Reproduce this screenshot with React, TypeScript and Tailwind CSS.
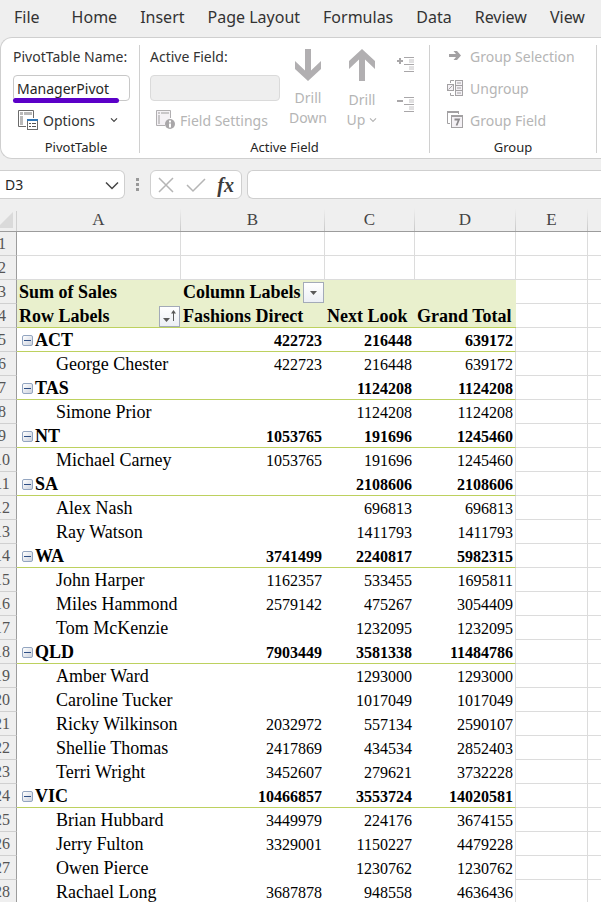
import type { ReactNode } from "react";

const tabs = ["Home", "Insert", "Page Layout", "Formulas", "Data", "Review", "View"];

type PivotRow = {
  label: string;
  values: [string, string, string];
  group?: boolean;
};

const rows: PivotRow[] = [
  { label: "ACT", values: ["422723", "216448", "639172"], group: true },
  { label: "George Chester", values: ["422723", "216448", "639172"] },
  { label: "TAS", values: ["", "1124208", "1124208"], group: true },
  { label: "Simone Prior", values: ["", "1124208", "1124208"] },
  { label: "NT", values: ["1053765", "191696", "1245460"], group: true },
  { label: "Michael Carney", values: ["1053765", "191696", "1245460"] },
  { label: "SA", values: ["", "2108606", "2108606"], group: true },
  { label: "Alex Nash", values: ["", "696813", "696813"] },
  { label: "Ray Watson", values: ["", "1411793", "1411793"] },
  { label: "WA", values: ["3741499", "2240817", "5982315"], group: true },
  { label: "John Harper", values: ["1162357", "533455", "1695811"] },
  { label: "Miles Hammond", values: ["2579142", "475267", "3054409"] },
  { label: "Tom McKenzie", values: ["", "1232095", "1232095"] },
  { label: "QLD", values: ["7903449", "3581338", "11484786"], group: true },
  { label: "Amber Ward", values: ["", "1293000", "1293000"] },
  { label: "Caroline Tucker", values: ["", "1017049", "1017049"] },
  { label: "Ricky Wilkinson", values: ["2032972", "557134", "2590107"] },
  { label: "Shellie Thomas", values: ["2417869", "434534", "2852403"] },
  { label: "Terri Wright", values: ["3452607", "279621", "3732228"] },
  { label: "VIC", values: ["10466857", "3553724", "14020581"], group: true },
  { label: "Brian Hubbard", values: ["3449979", "224176", "3674155"] },
  { label: "Jerry Fulton", values: ["3329001", "1150227", "4479228"] },
  { label: "Owen Pierce", values: ["", "1230762", "1230762"] },
  { label: "Rachael Long", values: ["3687878", "948558", "4636436"] },
];

const grid = "border-b border-r border-[#dcdcdc]";
const gridLast = "border-b border-[#dcdcdc]";

/* ICONS */
function OptionsIcon() {
  return (
    <svg width="20" height="20" viewBox="0 0 20 20" fill="none" aria-hidden="true">
      <path d="M8 16.5H.5V.5h15V8" stroke="#6b6b6b" />
      <path d="M2 2h3v3H2zM6 2h8v3H6zM2 6h3v9H2z" fill="#b9b9b9" />
      <rect x="9.5" y="9.5" width="10" height="10" fill="#fff" stroke="#6b6b6b" />
      <path d="M9 9h11v2H9z" fill="#2e75b6" />
      <path d="M11 13h2v1h-2zM11 16h2v1h-2z" fill="#555" />
      <path d="M14 13.500h4M14 16.500h4" stroke="#555" />
    </svg>
  );
}

function FieldSettingsIcon() {
  return (
    <svg width="20" height="20" viewBox="0 0 20 20" fill="none" aria-hidden="true">
      <path d="M9 15.5H.5V.5h14V8" fill="#f4f1f5" stroke="#b1afb1" />
      <path d="M2 2h2v2H2zM5 2h8v2H5zM2 5h2v9H2z" fill="#c9c7c9" />
      <circle cx="14" cy="14" r="5" fill="#a9a7a9" />
      <path d="M13 10.500h2v2h-2zM13 13.500h2v4h-2z" fill="#fff" />
    </svg>
  );
}

function BigArrow({ up }: { up?: boolean }) {
  return (
    <svg width="26" height="32" viewBox="0 0 26 32" aria-hidden="true">
      <path
        d={up ? "M13 0L26 12v8L16 10.500V32h-6V10.500L0 20v-8z" : "M13 32L26 20v-8L16 21.500V0h-6v21.500L0 12v8z"}
        fill="#b1afb1"
      />
    </svg>
  );
}

function FieldLinesIcon({ plus }: { plus?: boolean }) {
  return (
    <svg width="18" height="16" viewBox="0 0 18 16" fill="none" aria-hidden="true">
      <path d="M0 4h6" stroke="#a9a7a9" strokeWidth="2" />
      {plus && <path d="M3 1v6" stroke="#a9a7a9" strokeWidth="2" />}
      <path d="M7 .5h10M7 7.500h10M7 14.500h10" stroke="#a9a7a9" />
      <path d="M12 3h5M12 5h5M12 10h5M12 12h5" stroke="#c4c2c4" />
    </svg>
  );
}

function ArrowRightIcon() {
  return (
    <svg width="17" height="16" viewBox="0 0 17 16" aria-hidden="true">
      <path d="M2 6h7L6.500 3h3.500l4 4.500-4 4.500H6.500L9 9H2z" fill="#a3a1a3" />
    </svg>
  );
}

function UngroupIcon() {
  return (
    <svg width="17" height="17" viewBox="0 0 17 17" fill="none" stroke="#a3a1a3" aria-hidden="true">
      <path d="M7 .5H3.500V3M3.500 13v2.500H7" />
      <rect x=".5" y="4.500" width="6" height="6" fill="#f4f1f5" />
      <path d="M1.500 9.500l4-4" />
      <rect x="8.500" y=".5" width="7" height="15" fill="#f4f1f5" />
      <path d="M8 5.500h8M8 10.500h8" />
      <path d="M10 3h4M10 8h4M10 13h4" />
    </svg>
  );
}

function GroupFieldIcon() {
  return (
    <svg width="17" height="18" viewBox="0 0 17 18" fill="none" aria-hidden="true">
      <path d="M3 12.500H.5V.5h11V3" stroke="#a3a1a3" />
      <path d="M0 1h12" stroke="#a3a1a3" strokeWidth="2" />
      <rect x="4.500" y="4.500" width="11" height="12" fill="#f4f1f5" stroke="#a3a1a3" />
      <path d="M4 5h12" stroke="#a3a1a3" strokeWidth="2" />
      <path d="M7.500 8.500H12l-2.500 6" stroke="#8c8a8c" strokeWidth="1.800" />
    </svg>
  );
}

function Chevron({ size, color }: { size: number; color: string }) {
  return (
    <svg width={size} height={size} viewBox="0 0 12 12" fill="none" aria-hidden="true">
      <path d="M1.500 3.500L6 8l4.500-4.500" stroke={color} strokeWidth="1.800" />
    </svg>
  );
}

/* RIBBON */
function RibbonGroup({ title, className, children }: { title: string; className: string; children: ReactNode }) {
  return (
    <section className={`shrink-0 flex flex-col justify-between ${className}`}>
      {children}
      <h2 className="h-[22px] text-center text-[13px] leading-[22px] text-[#262626]">{title}</h2>
    </section>
  );
}

function Divider() {
  return <div className="w-px shrink-0 my-[5px] bg-[#d0d0d0]" />;
}

function Ribbon() {
  return (
    <div className="flex h-[122px] pt-0.5 bg-white border border-r-0 border-[#cfcfcf] rounded-l-xl text-[14px] text-[#333] overflow-hidden">
      <RibbonGroup title="PivotTable" className="w-[138px] pl-3">
        <div className="-mr-2">
          <label htmlFor="pivot-name" className="flex items-center h-8 whitespace-nowrap">PivotTable Name:</label>
          <div className="relative flex items-center h-8">
            <input
              id="pivot-name"
              defaultValue="ManagerPivot"
              className="w-[117px] h-[26px] pl-[3px] border border-[#c8c8c8] rounded bg-white text-[#262626]"
            />
            <div className="absolute left-0 bottom-px w-[106px] h-[5px] rounded-full bg-[#5b00c8]" />
          </div>
          <button className="flex items-center h-8 pl-[5px] gap-[5px]">
            <OptionsIcon />
            Options
            <span className="ml-[10px]">
              <Chevron size={8} color="#444" />
            </span>
          </button>
        </div>
      </RibbonGroup>
      <Divider />
      <RibbonGroup title="Active Field" className="w-[289px] px-[10px]">
        <div className="flex text-[#b5b5b5]">
          <div className="w-[130px] shrink-0">
            <label htmlFor="active-field" className="flex items-center h-8 text-[#333]">Active Field:</label>
            <div className="flex items-center h-8">
              <input id="active-field" disabled className="w-full h-[26px] border border-[#dadada] rounded bg-[#eee]" />
            </div>
            <button className="flex items-center h-8 pl-[6px] gap-1 whitespace-nowrap">
              <FieldSettingsIcon />
              Field Settings
            </button>
          </div>
          <button className="flex flex-col items-center w-14 pt-[9px] leading-5">
            <BigArrow />
            <span className="pt-[7px]">Drill<br />Down</span>
          </button>
          <button className="flex flex-col items-center w-[52px] pt-[9px] leading-5">
            <BigArrow up />
            <span className="pt-[9px]">Drill</span>
            <span className="flex items-center gap-1">Up <Chevron size={8} color="#b5b5b5" /></span>
          </button>
          <div className="flex flex-col gap-6 pt-[17px] pl-[9px]">
            <button aria-label="Expand Field"><FieldLinesIcon plus /></button>
            <button aria-label="Collapse Field"><FieldLinesIcon /></button>
          </div>
        </div>
      </RibbonGroup>
      <Divider />
      <RibbonGroup title="Group" className="w-[166px]">
        <div className="pl-[17px] text-[#b5b5b5] whitespace-nowrap">
          <button className="flex items-center h-8 gap-[6px]"><ArrowRightIcon />Group Selection</button>
          <button className="flex items-center h-8 gap-[6px]"><UngroupIcon />Ungroup</button>
          <button className="flex items-center h-8 gap-[6px]"><GroupFieldIcon />Group Field</button>
        </div>
      </RibbonGroup>
      <Divider />
    </div>
  );
}

/* FORMULA BAR */
function FormulaBar() {
  return (
    <div className="flex items-stretch h-[30px] mt-[11px]">
      <div className="flex items-center w-[125px] shrink-0 pr-1 bg-white border border-l-0 border-[#cfcfcf] rounded-r-md">
        <input aria-label="Name Box" defaultValue="D3" className="w-full min-w-0 pl-[5px] text-[14px] text-[#262626]" />
        <button aria-label="Name list" className="shrink-0">
          <svg width="16" height="16" viewBox="0 0 16 16" fill="none" stroke="#444" strokeWidth="1.500" aria-hidden="true">
            <path d="M2 5.500l6 6 6-6" />
          </svg>
        </button>
      </div>
      <div className="flex flex-col justify-center items-center gap-0.5 w-[25px] shrink-0">
        <span className="size-[3px] bg-[#999]" />
        <span className="size-[3px] bg-[#999]" />
        <span className="size-[3px] bg-[#999]" />
      </div>
      <div className="flex items-center justify-between w-[92px] shrink-0 px-[7px] bg-white border border-[#cfcfcf] rounded-md">
        <button aria-label="Cancel">
          <svg width="16" height="16" viewBox="0 0 16 16" fill="none" stroke="#b5b5b5" strokeWidth="1.500" aria-hidden="true">
            <path d="M1 1l14 14M15 1L1 15" />
          </svg>
        </button>
        <button aria-label="Enter">
          <svg width="20" height="16" viewBox="0 0 20 16" fill="none" stroke="#b5b5b5" strokeWidth="1.500" aria-hidden="true">
            <path d="M1 8l6 6L19 2" />
          </svg>
        </button>
        <button className="font-['Liberation_Serif',serif] font-bold italic text-[20px] leading-6 text-[#3c3c3c]">fx</button>
      </div>
      <input
        aria-label="Formula"
        className="grow min-w-0 ml-[5px] bg-white border border-r-0 border-[#cfcfcf] rounded-l-md"
      />
    </div>
  );
}

/* SHEET */
function FilterButton({ label, sorted }: { label: string; sorted?: boolean }) {
  return (
    <button
      aria-label={label}
      className="flex items-center justify-center w-[21px] h-[21px] mr-px shrink-0 border border-[#a3aab8] bg-linear-to-b from-white to-[#eceff5]"
    >
      <svg width="15" height="15" viewBox="0 0 15 15" fill="#5a5a5a" aria-hidden="true">
        {sorted ? (
          <>
            <path d="M1 9h7l-3.500 4z" />
            <path d="M11 3h1v9h-1zM11.500 1L14 4.500H9z" />
          </>
        ) : (
          <path d="M4 6h7l-3.500 4z" />
        )}
      </svg>
    </button>
  );
}

function CollapseButton({ label }: { label: string }) {
  return (
    <button
      aria-label={`Collapse ${label}`}
      className="flex items-center justify-center size-[11px] shrink-0 border border-[#93a5c0] rounded-xs bg-linear-to-br from-white to-[#cdd3de]"
    >
      <span className="w-[7px] h-px bg-[#2f4f85]" />
    </button>
  );
}

function RowNumber({ n }: { n: number }) {
  return (
    <th scope="row" className="border-b border-b-[#d0d0d0] border-r border-r-[#9c9c9c] bg-[#efefef] font-normal text-[16px] text-[#555] text-center">
      {n}
    </th>
  );
}

function ColumnHeading({ children }: { children?: ReactNode }) {
  return (
    <th scope="col" className="h-8 border-b border-[#9c9c9c] p-0 font-normal text-[17px] text-[#444]">
      <div className="flex">
        <span className="grow pt-[10px] leading-[22px]">{children}</span>
        {children && <span className="w-px bg-linear-to-b from-[#efefef] from-30% to-[#c8c8c8]" />}
      </div>
    </th>
  );
}

function Sheet() {
  return (
    <div className="grow min-h-0 overflow-hidden">
      {/* scrolled slightly so the row numbers are cut at the left edge */}
      <table className="-ml-3 w-[calc(100%+12px)] table-fixed border-separate border-spacing-0 bg-white font-['Liberation_Serif',serif] text-[16px] leading-[21px] text-black [&_td]:p-0 [&_td]:pt-0.5 [&_td]:align-top [&_tbody_th]:p-0 [&_tbody_th]:pt-px [&_tbody_th]:align-top [&_tbody_tr]:h-6">
        <colgroup>
          <col className="w-[29px]" />
          <col className="w-[164px]" />
          <col className="w-[144px]" />
          <col className="w-[90px]" />
          <col className="w-[101px]" />
          <col className="w-[72px]" />
          <col />
        </colgroup>
        <thead className="bg-[#efefef]">
          <tr>
            <th className="border-b border-[#9c9c9c] p-0 align-bottom">
              <div className="flex items-end h-[31px]">
                <svg width="25" height="20" viewBox="0 0 25 20" aria-hidden="true">
                  <path d="M25 1v16H9z" fill="#dadada" />
                </svg>
                <span className="w-px h-5 ml-[3px] bg-[#d0d0d0]" />
              </div>
            </th>
            <ColumnHeading>A</ColumnHeading>
            <ColumnHeading>B</ColumnHeading>
            <ColumnHeading>C</ColumnHeading>
            <ColumnHeading>D</ColumnHeading>
            <ColumnHeading>E</ColumnHeading>
            <ColumnHeading />
          </tr>
        </thead>
        <tbody>
          {[1, 2].map((n) => (
            <tr key={n}>
              <RowNumber n={n} />
              <td className={grid} />
              <td className={grid} />
              <td className={grid} />
              <td className={grid} />
              <td className={grid} />
              <td className={gridLast} />
            </tr>
          ))}
          <tr className="font-bold text-[18px]">
            <RowNumber n={3} />
            <td className="bg-[#e9f0cd]"><div className="pl-0.5">Sum of Sales</div></td>
            <td className="bg-[#e9f0cd]">
              <div className="flex items-center justify-between h-[21px] pl-0.5 whitespace-nowrap">
                Column Labels
                <FilterButton label="Filter columns" />
              </div>
            </td>
            <td className="bg-[#e9f0cd]" />
            <td className="bg-[#e9f0cd]" />
            <td className={grid} />
            <td className={gridLast} />
          </tr>
          <tr className="font-bold text-[18px]">
            <RowNumber n={4} />
            <td className="bg-[#e9f0cd] border-b border-[#bdd15f]">
              <div className="flex items-center justify-between h-[21px] pl-0.5">
                Row Labels
                <FilterButton label="Filter rows" sorted />
              </div>
            </td>
            <td className="bg-[#e9f0cd] border-b border-[#bdd15f]"><div className="pl-0.5">Fashions Direct</div></td>
            <td className="bg-[#e9f0cd] border-b border-[#bdd15f]"><div className="pl-0.5 whitespace-nowrap">Next Look</div></td>
            <td className="bg-[#e9f0cd] border-b border-[#bdd15f]"><div className="pl-0.5 whitespace-nowrap">Grand Total</div></td>
            <td className={grid} />
            <td className={gridLast} />
          </tr>
          {rows.map((row, i) => (
            <tr key={row.label} className={row.group ? "font-bold" : ""}>
              <RowNumber n={i + 5} />
              <td className={row.group ? "border-b border-[#bdd15f]" : ""}>
                {row.group ? (
                  <div className="flex items-center gap-0.5 pl-[5px] text-[18px]">
                    <CollapseButton label={row.label} />
                    {row.label}
                  </div>
                ) : (
                  <div className="pl-[39px] text-[18px] whitespace-nowrap">{row.label}</div>
                )}
              </td>
              {row.values.map((value, col) => (
                <td
                  key={col}
                  className={`text-right ${col === 2 ? "border-r border-r-[#dcdcdc]" : ""} ${row.group ? "border-b border-b-[#bdd15f]" : ""}`}
                >
                  <div className={col === 2 ? "pr-0.5" : "pr-[3px]"}>{value}</div>
                </td>
              ))}
              <td className={grid} />
              <td className={gridLast} />
            </tr>
          ))}
        </tbody>
      </table>
    </div>
  );
}

export default function App() {
  return (
    <div className="flex flex-col h-screen overflow-hidden bg-[#efefef] font-['Noto_Sans',sans-serif]">
      <nav className="flex items-center h-[37px] shrink-0 pl-[14px] pb-1 gap-[23px] text-[16px] text-[#333] whitespace-nowrap">
        <button className="mr-[9px]">File</button>
        {tabs.map((tab) => (
          <button key={tab}>{tab}</button>
        ))}
      </nav>
      <Ribbon />
      <FormulaBar />
      <Sheet />
    </div>
  );
}
